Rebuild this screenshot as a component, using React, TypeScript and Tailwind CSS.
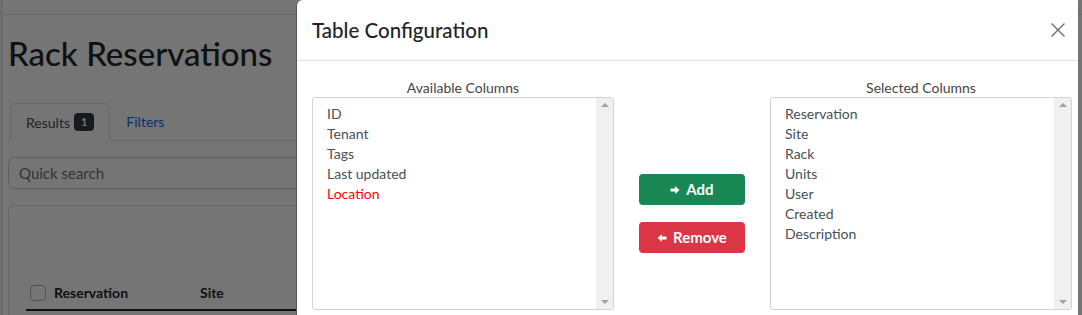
import React from 'react'

const AVAILABLE = ['ID', 'Tenant', 'Tags', 'Last updated', 'Location']
const SELECTED = ['Reservation', 'Site', 'Rack', 'Units', 'User', 'Created', 'Description']

function ArrowIcon({ dir }: { dir: 'left' | 'right' }) {
  return (
    <svg
      width="10"
      height="10"
      viewBox="0 0 10 10"
      className={dir === 'left' ? 'rotate-180' : ''}
      fill="currentColor"
    >
      <path d="M0.5 3.6h4.6V1l4.4 4-4.4 4V6.4H0.5z" />
    </svg>
  )
}

function ListBox({ items, highlight }: { items: string[]; highlight?: string }) {
  return (
    <div className="flex h-[213px] overflow-hidden rounded-[3px] border border-[#ced4da] bg-white">
      <ul className="flex-1 pl-[14px] pt-[6px] text-[14px] leading-[20px] text-[#495057]">
        {items.map((item) => (
          <li key={item} className={item === highlight ? 'text-[#ff0000]' : ''}>
            {item}
          </li>
        ))}
      </ul>
      <div className="flex w-[17px] flex-col items-center justify-between bg-[#f0f0f0] py-[5px]">
        <span className="h-0 w-0 border-x-[4px] border-b-[4px] border-x-transparent border-b-[#a3a3a3]" />
        <span className="h-0 w-0 border-x-[4px] border-t-[4px] border-x-transparent border-t-[#a3a3a3]" />
      </div>
    </div>
  )
}

export default function App() {
  return (
    <div className="relative h-[315px] w-[1082px] overflow-hidden bg-white font-['Lato',sans-serif] text-[#212529]">
      {/* page behind the dialog */}
      <div className="h-full border-l-[3px] border-[#e9ecef]">
        <div className="h-[15px] border-b border-[#dee2e6]" />
        <div className="px-[5px]">
          <h1 className="mt-[20px] text-[33px] font-medium leading-[36px]">Rack Reservations</h1>
          <div className="mt-[31px] flex items-end border-b border-[#dee2e6]">
            <div className="-mb-px ml-[2px] flex h-[38px] items-center gap-[4px] rounded-t-md border border-[#dee2e6] border-b-white bg-white px-[15px] text-[14px] text-[#495057]">
              Results
              <span className="rounded-[4px] bg-[#343a40] px-[7px] py-[2px] text-[11px] font-bold leading-[14px] text-white">1</span>
            </div>
            <div className="flex h-[38px] items-center px-[16px] text-[14px] text-[#0d6efd]">Filters</div>
          </div>
          <div className="mt-[16px] flex h-[32px] items-center rounded-md border border-[#ced4da] px-[10px] text-[15px] text-[#6c757d]">
            Quick search
          </div>
          <div className="mt-[16px] h-[200px] rounded-md border border-[#dee2e6] px-[17px] pt-[76px]">
            <div className="flex items-center border-b-2 border-[#212529] pb-[6px] text-[14px] font-bold">
              <span className="ml-[4px] h-[16px] w-[16px] rounded-[4px] border border-[#adb5bd] bg-white" />
              <span className="ml-[8px] w-[146px]">Reservation</span>
              <span>Site</span>
            </div>
          </div>
        </div>
      </div>

      {/* backdrop */}
      <div className="absolute inset-0 bg-black/[0.54]" />

      {/* dialog */}
      <div className="absolute left-[296px] top-0 h-[330px] w-[782px] rounded-tl-md border-l border-[#555] bg-white">
        <div className="flex h-[61px] items-center justify-between border-b border-[#dee2e6] pl-[15px] pr-[8px]">
          <h5 className="text-[20.5px] font-medium text-[#212529]">Table Configuration</h5>
          <button type="button" className="flex h-[24px] w-[24px] items-center justify-center text-[#6c6c6c]">
            <svg width="16" height="16" viewBox="0 0 16 16" stroke="currentColor" strokeWidth="1.4">
              <path d="M1.5 1.5l13 13M14.5 1.5l-13 13" />
            </svg>
          </button>
        </div>
        <div className="flex pl-[15px] pr-[5px] pt-[17px]">
          <div className="w-[302px]">
            <div className="text-center text-[14px] leading-[19px] text-[#444]">Available Columns</div>
            <ListBox items={AVAILABLE} highlight="Location" />
          </div>
          <div className="flex w-[156px] flex-col items-center gap-[17px] pt-[96px]">
            <button
              type="button"
              className="flex h-[31px] w-[106px] items-center justify-center gap-[6px] rounded-[4px] bg-[#198754] text-[15px] font-bold text-white"
            >
              <ArrowIcon dir="right" />
              Add
            </button>
            <button
              type="button"
              className="flex h-[31px] w-[106px] items-center justify-center gap-[6px] rounded-[4px] bg-[#dc3545] text-[15px] font-bold text-white"
            >
              <ArrowIcon dir="left" />
              Remove
            </button>
          </div>
          <div className="w-[302px]">
            <div className="text-center text-[14px] leading-[19px] text-[#444]">Selected Columns</div>
            <ListBox items={SELECTED} />
          </div>
        </div>
      </div>
    </div>
  )
}
